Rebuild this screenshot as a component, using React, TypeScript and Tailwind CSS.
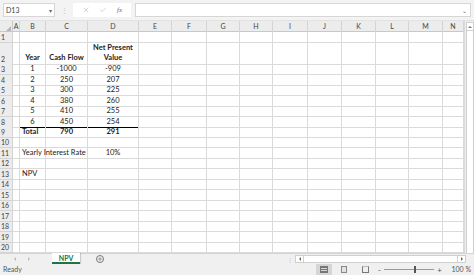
import { X, Check, Plus } from "lucide-react"

const cols = ["A", "B", "C", "D", "E", "F", "G", "H", "I", "J", "K", "L", "M", "N"]
const tpl = "grid grid-cols-[13px_7px_26px_42px_51px_33px_35px_33px_33px_35px_34px_34px_33px_34px_21px]"

type Row = { n: number; h: string; cells?: Record<string, { t: string; bold?: boolean; align?: string }>; line?: boolean }

const data: Row[] = [
  { n: 1, h: "h-[11px]" },
  {
    n: 2,
    h: "h-[21px]",
    cells: {
      B: { t: "Year", bold: true },
      C: { t: "Cash Flow", bold: true },
      D: { t: "Net Present Value", bold: true },
    },
  },
  { n: 3, h: "h-[10.5px]", cells: { B: { t: "1" }, C: { t: "-1000" }, D: { t: "-909" } } },
  { n: 4, h: "h-[10.5px]", cells: { B: { t: "2" }, C: { t: "250" }, D: { t: "207" } } },
  { n: 5, h: "h-[10.5px]", cells: { B: { t: "3" }, C: { t: "300" }, D: { t: "225" } } },
  { n: 6, h: "h-[10.5px]", cells: { B: { t: "4" }, C: { t: "380" }, D: { t: "260" } } },
  { n: 7, h: "h-[10.5px]", cells: { B: { t: "5" }, C: { t: "410" }, D: { t: "255" } } },
  { n: 8, h: "h-[10.5px]", line: true, cells: { B: { t: "6" }, C: { t: "450" }, D: { t: "254" } } },
  {
    n: 9,
    h: "h-[10.5px]",
    cells: { B: { t: "Total", bold: true, align: "left" }, C: { t: "790", bold: true }, D: { t: "291", bold: true } },
  },
  { n: 10, h: "h-[10.5px]" },
  { n: 11, h: "h-[10.5px]", cells: { B: { t: "Yearly Interest Rate", align: "left" }, D: { t: "10%" } } },
  { n: 12, h: "h-[10.5px]" },
  { n: 13, h: "h-[10.5px]", cells: { B: { t: "NPV", align: "left" } } },
  ...[14, 15, 16, 17, 18, 19, 20].map((n) => ({ n, h: "h-[10.5px]" })),
]

export default function App() {
  return (
    <div className="w-[474px] h-[275px] overflow-hidden bg-white flex flex-col text-[#222] font-['Lato','Open_Sans',sans-serif]">
      {/* formula bar */}
      <div className="h-[21px] bg-[#f3f3f3] flex items-center px-[3px] gap-[4px] border-b border-[#e2e2e2]">
        <div className="w-[52px] h-[14px] bg-white border border-[#d6d6d6] flex items-center justify-between px-[2px] text-[7px] text-[#444]">
          <span>D13</span>
          <span className="text-[6px] text-[#666]">▾</span>
        </div>
        <div className="w-[10px] flex justify-center text-[7px] text-[#bbb]">⋮</div>
        <div className="w-[58px] h-[14px] bg-white flex items-center justify-around px-[4px] text-[#aaa]">
          <X size={8} strokeWidth={1.5} />
          <Check size={8} strokeWidth={1.5} />
          <span className="text-[7px] italic text-[#666] font-['Liberation_Serif',serif]">fx</span>
        </div>
        <div className="flex-1 h-[14px] bg-white border border-[#d6d6d6] flex items-center justify-end pr-[3px] text-[6px] text-[#666]">
          ⌄
        </div>
      </div>

      {/* grid + vscroll */}
      <div className="flex-1 flex overflow-hidden">
        <div className="w-[464px] overflow-hidden">
          <div className={`${tpl} h-[11px] bg-[#ececec] text-[7px] text-[#444] border-b border-[#c8c8c8]`}>
            <div className="border-r border-[#c8c8c8] flex items-end justify-end">
              <span className="w-0 h-0 border-l-[5px] border-l-transparent border-b-[5px] border-b-[#b5b5b5] mr-[1px] mb-[1px]" />
            </div>
            {cols.map((c) => (
              <div key={c} className="border-r border-[#d4d4d4] flex items-center justify-center">
                {c}
              </div>
            ))}
          </div>
          {data.map((r) => (
            <div key={r.n} className={`${tpl} ${r.h} text-[7.5px]`}>
              <div className="bg-[#ececec] border-r border-b border-[#d4d4d4] text-[#444] text-[7px] flex items-end pl-[1px] leading-[9px]">
                {r.n}
              </div>
              {cols.map((c) => {
                const cell = r.cells?.[c]
                const line = r.line && (c === "B" || c === "C" || c === "D")
                return (
                  <div
                    key={c}
                    className={`relative border-r ${line ? "border-b-[1px] border-b-black" : "border-b"} border-[#dadada] flex items-end leading-[10px] whitespace-nowrap ${
                      cell?.align === "left" ? "justify-start pl-[2px]" : "justify-center"
                    } ${cell?.bold ? "font-bold" : ""}`}
                  >
                    {cell && c === "D" && r.n === 2 ? (
                      <span className="text-center leading-[10px] mb-[1px]">
                        Net Present
                        <br />
                        Value
                      </span>
                    ) : cell ? (
                      <span className={`${cell.align === "left" ? "absolute left-[2px] bottom-0" : ""} ${r.n === 2 ? "mb-[1px]" : ""}`}>{cell.t}</span>
                    ) : null}
                  </div>
                )
              })}
            </div>
          ))}
        </div>
        <div className="w-[10px] bg-[#f0f0f0] border-l border-[#dadada] flex flex-col items-center">
          <div className="w-[8px] h-[9px] bg-white border border-[#cfcfcf] mt-[1px] flex items-center justify-center">
            <span className="w-0 h-0 border-l-[2px] border-r-[2px] border-b-[2px] border-l-transparent border-r-transparent border-b-[#777]" />
          </div>
          <div className="w-[8px] flex-1 bg-white border-x border-[#cfcfcf]" />
        </div>
      </div>

      {/* sheet tabs */}
      <div className="h-[11px] bg-[#f0f0f0] flex items-stretch border-t border-[#d4d4d4]">
        <div className="w-[52px] flex items-center gap-[12px] pl-[14px]">
          <span className="w-0 h-0 border-t-[2px] border-b-[2px] border-r-[2px] border-t-transparent border-b-transparent border-r-[#bbb]" />
          <span className="w-0 h-0 border-t-[2px] border-b-[2px] border-l-[2px] border-t-transparent border-b-transparent border-l-[#bbb]" />
        </div>
        <div className="w-[28px] bg-white flex flex-col items-center justify-center -mt-px border-b-2 border-[#217346] shadow-[1px_0_1px_rgba(0,0,0,0.15)]">
          <span className="text-[7px] font-bold text-[#217346] leading-[8px]">NPV</span>
        </div>
        <div className="w-[40px] flex items-center justify-center">
          <span className="w-[8px] h-[8px] rounded-full border border-[#777] flex items-center justify-center text-[#555]">
            <Plus size={6} strokeWidth={2} />
          </span>
        </div>
        <div className="flex-1" />
        <div className="w-[10px] flex items-center justify-center text-[6px] text-[#bbb]">⋮</div>
        <div className="w-[171px] my-[1px] mr-[8px] bg-white border border-[#cfcfcf] flex items-center justify-between">
          <span className="w-[8px] h-full border-r border-[#cfcfcf] flex items-center justify-center">
            <span className="w-0 h-0 border-t-[2px] border-b-[2px] border-r-[2px] border-t-transparent border-b-transparent border-r-[#666]" />
          </span>
          <span className="w-[8px] h-full border-l border-[#cfcfcf] flex items-center justify-center">
            <span className="w-0 h-0 border-t-[2px] border-b-[2px] border-l-[2px] border-t-transparent border-b-transparent border-l-[#666]" />
          </span>
        </div>
      </div>

      {/* status bar */}
      <div className="h-[11px] bg-[#f0f0f0] flex items-center text-[7px] leading-none text-[#555]">
        <span className="pl-[3px]">Ready</span>
        <div className="flex-1" />
        <div className="w-[16px] h-[11px] bg-[#d6d6d6] flex items-center justify-center">
          <span className="w-[8px] h-[7px] border border-[#777] bg-[repeating-linear-gradient(0deg,#777_0_1px,transparent_1px_2px)]" />
        </div>
        <div className="w-[24px] flex items-center justify-center">
          <span className="w-[6px] h-[7px] border border-[#888] bg-[#e3e3e3]" />
        </div>
        <div className="w-[18px] flex items-center justify-center">
          <span className="w-[7px] h-[7px] border border-[#777] border-t-[#bbb]" />
        </div>
        <div className="w-[70px] flex items-center gap-[3px] pl-[4px] pr-[2px]">
          <span className="text-[8px]">-</span>
          <div className="relative flex-1 h-px bg-[#999]">
            <span className="absolute left-[30px] -top-[3px] w-[2px] h-[7px] bg-[#555]" />
          </div>
          <span className="text-[8px]">+</span>
        </div>
        <span className="w-[30px] shrink-0 text-right pr-[3px] whitespace-nowrap">100 %</span>
      </div>
    </div>
  )
}
